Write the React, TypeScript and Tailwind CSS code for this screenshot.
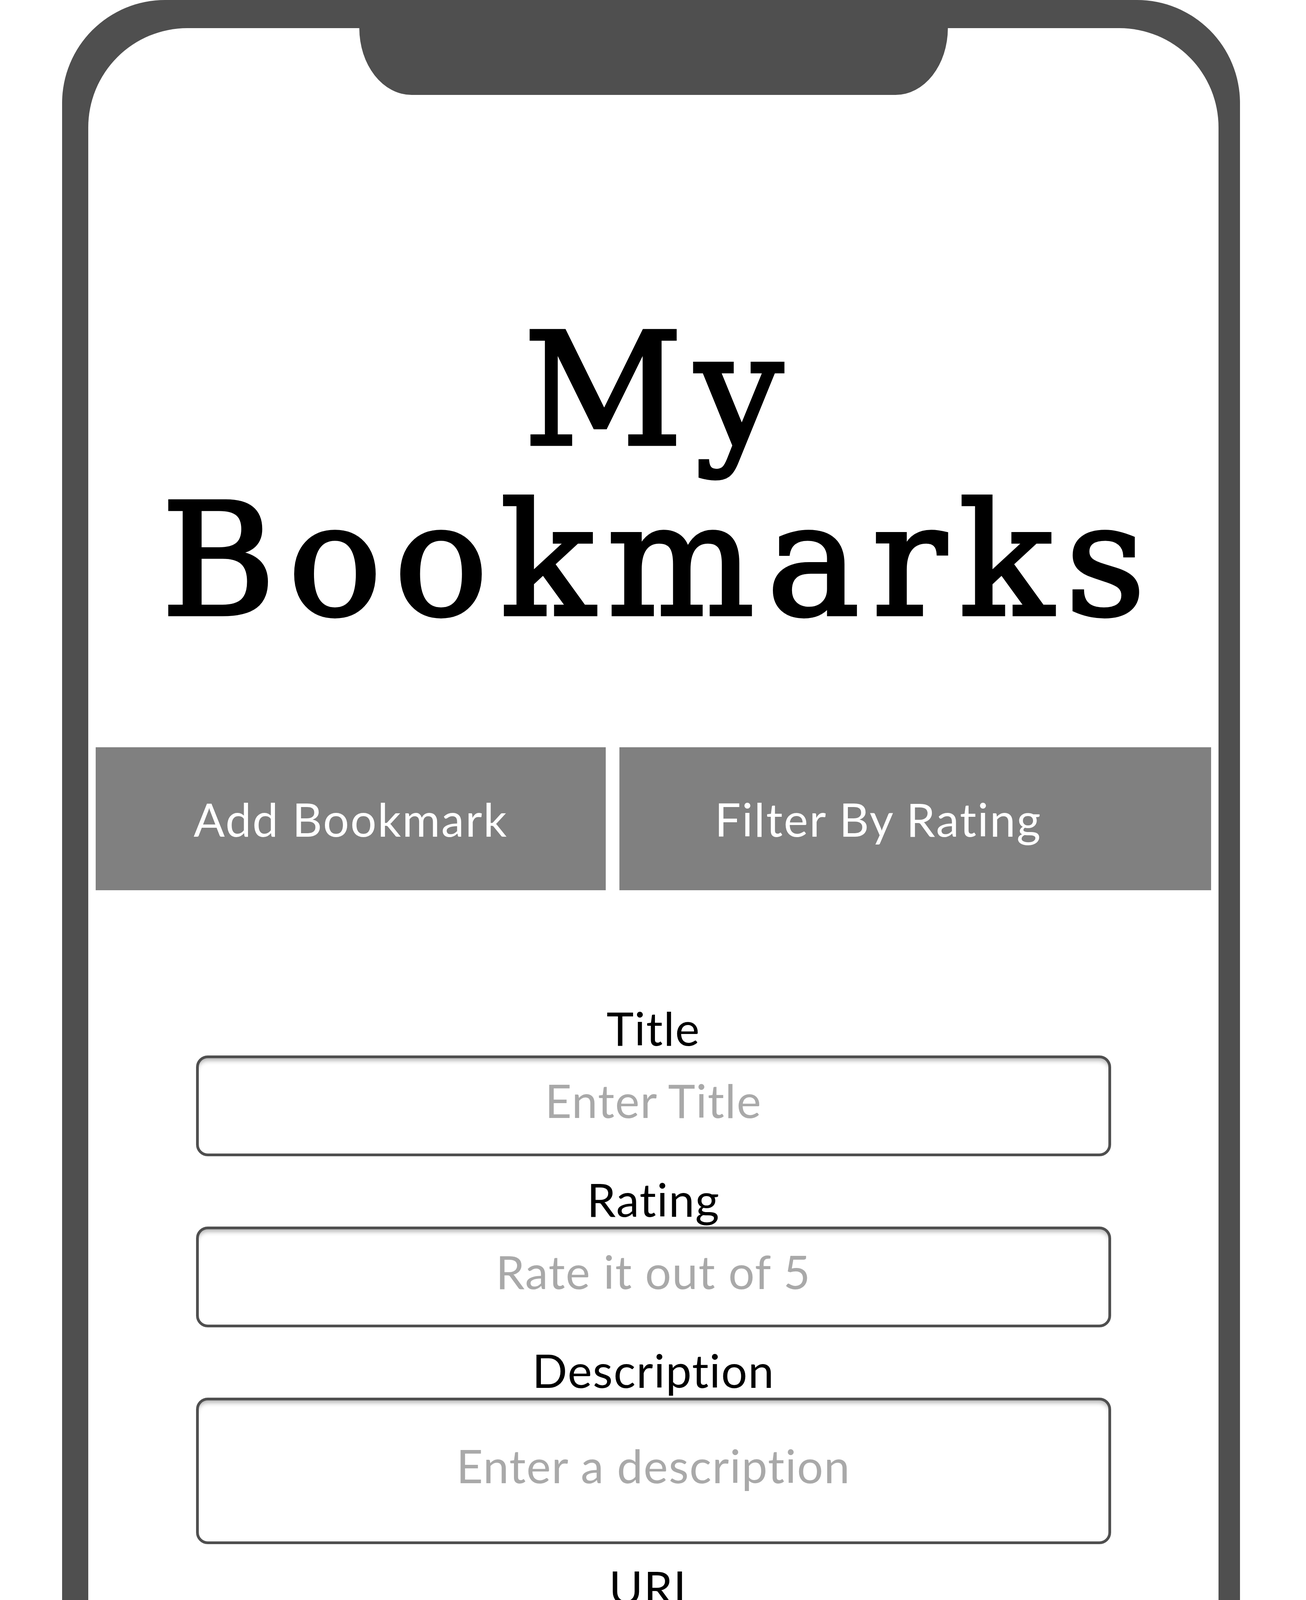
import React from 'react';

const fields = [
  { label: 'Title', placeholder: 'Enter Title', multiline: false },
  { label: 'Rating', placeholder: 'Rate it out of 5', multiline: false },
  { label: 'Description', placeholder: 'Enter a description', multiline: true },
  { label: 'URL', placeholder: 'https://www.ncbi.nlm.nih.gov/', multiline: false },
];

function Field({ label, placeholder, multiline }: { label: string; placeholder: string; multiline: boolean }) {
  const box =
    'block w-full rounded-[30px] border-[7px] border-[#4f4f4f] bg-white text-center text-[118px] tracking-[2px] text-black shadow-[inset_0_12px_12px_-6px_rgba(0,0,0,0.3)] outline-none placeholder:text-[#a9a9a9]';
  return (
    <div className="flex flex-col">
      <label className="text-center text-[118px] leading-[140px] tracking-[2px] text-black">{label}</label>
      {multiline ? (
        <textarea placeholder={placeholder} className={`${box} h-[375px] resize-none pt-[96px] leading-[142px]`} />
      ) : (
        <input type="text" placeholder={placeholder} className={`${box} h-[258px] pb-[30px]`} />
      )}
    </div>
  );
}

export default function App() {
  return (
    <div className="h-[5634px] w-[3344px] bg-white pl-[159px] font-['Lato','Liberation_Sans',sans-serif] [font-variant-ligatures:none]">
      {/* phone frame */}
      <div className="h-[5489px] w-[3016px] rounded-[264px] bg-[#4f4f4f] pb-[81px] pl-[67px] pr-[55px] pt-[72px]">
        <div className="relative flex h-full flex-col overflow-hidden rounded-b-[220px] rounded-t-[254px] bg-white">
          {/* notch */}
          <div className="absolute left-[694px] top-0 h-[171px] w-[1507px] rounded-bl-[134px_171px] rounded-br-[134px_171px] bg-[#4f4f4f]" />

          <h1 className="mt-[710px] pl-[32px] text-center font-['DejaVu_Serif',serif] text-[398px] leading-[436px] tracking-[32px] text-black [-webkit-text-stroke:9px_#000]">
            <span className="block">My</span>
            <span className="block">Bookmarks</span>
          </h1>

          <div className="mt-[259px] flex gap-[35px] px-[19px]">
            <button className="h-[366px] w-[1306px] bg-[#808080] text-center text-[118px] tracking-[3px] text-white">
              Add Bookmark
            </button>
            <button className="h-[366px] flex-1 bg-[#808080] pl-[244px] text-left text-[118px] tracking-[3px] text-white">
              Filter By Rating
            </button>
          </div>

          <form className="mx-auto mt-[283px] flex w-[2343px] flex-col gap-[40px]">
            {fields.map((f) => (
              <Field key={f.label} {...f} />
            ))}
            <button
              type="button"
              className="mt-[115px] h-[225px] w-full rounded-[30px] border-[6px] border-[#4f4f4f] bg-[#808080] text-[118px] tracking-[2px] text-white"
            >
              Create Bookmark
            </button>
          </form>

          {/* next section, cut off by the screen edge */}
          <div className="mb-[4px] mt-auto h-[125px] overflow-hidden bg-[#e2e2e2] pl-[148px] pt-[69px]">
            <p className="whitespace-nowrap text-[118px] leading-[142px] text-black">
              What is an efficient and healthy work routine?
            </p>
          </div>

          {/* home indicator */}
          <div className="absolute left-[934px] top-[5157px] h-[82px] w-[1054px] rounded-[40px] bg-[#4f4f4f]" />
        </div>
      </div>
    </div>
  );
}
